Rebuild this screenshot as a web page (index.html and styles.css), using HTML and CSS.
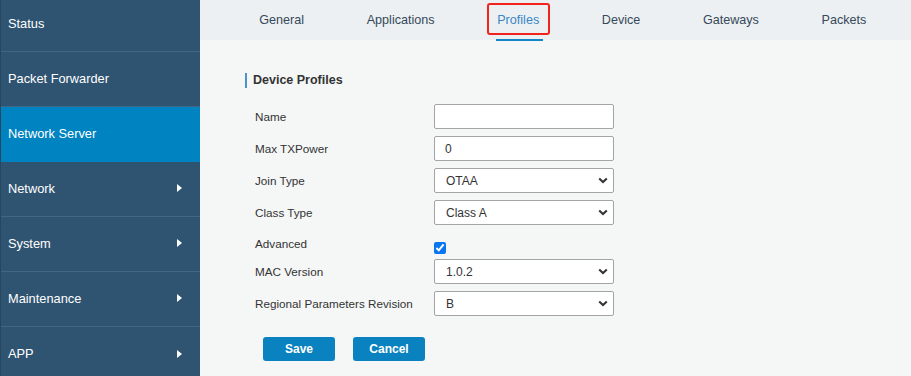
FILE: index.html
```html
<!DOCTYPE html>
<html>
<head>
<meta charset="utf-8">
<link rel="stylesheet" href="styles.css">
</head>
<body>
<div class="app">
  <nav class="sidebar">
    <div class="item first">Status</div>
    <div class="item">Packet Forwarder</div>
    <div class="item active">Network Server</div>
    <div class="item sub">Network<span class="caret"></span></div>
    <div class="item sub">System<span class="caret"></span></div>
    <div class="item sub">Maintenance<span class="caret"></span></div>
    <div class="item sub last">APP<span class="caret"></span></div>
  </nav>
  <main class="main">
    <div class="tabs">
      <div class="tab">General</div>
      <div class="tab">Applications</div>
      <div class="tab active">Profiles<span class="highlight"></span></div>
      <div class="tab">Device</div>
      <div class="tab">Gateways</div>
      <div class="tab">Packets</div>
    </div>
    <div class="content">
      <h3 class="section-title">Device Profiles</h3>
      <form class="form">
        <div class="row"><label>Name</label><input class="ctl" type="text" value=""></div>
        <div class="row"><label>Max TXPower</label><input class="ctl" type="text" value="0"></div>
        <div class="row"><label>Join Type</label><select class="ctl sel"><option>OTAA</option></select></div>
        <div class="row"><label>Class Type</label><select class="ctl sel"><option>Class A</option></select></div>
        <div class="row check-row"><label>Advanced</label><input class="check" type="checkbox" checked></div>
        <div class="row"><label>MAC Version</label><select class="ctl sel"><option>1.0.2</option></select></div>
        <div class="row"><label>Regional Parameters Revision</label><select class="ctl sel"><option>B</option></select></div>
        <div class="buttons">
          <button type="button" class="btn">Save</button>
          <button type="button" class="btn">Cancel</button>
        </div>
      </form>
    </div>
  </main>
</div>
</body>
</html>
```
FILE: styles.css
```css
* { box-sizing: border-box; }
html, body { margin: 0; padding: 0; }
body {
  font-family: "Liberation Sans", Arial, sans-serif;
  background: #f5f7f7;
  width: 911px;
  height: 376px;
  overflow: hidden;
}
.app {
  display: flex;
  height: 376px;
}
.sidebar {
  width: 200px;
  flex: none;
  background: #2f5471;
  border-left: 1px solid #27475f;
  display: flex;
  flex-direction: column;
}
.sidebar .item {
  height: 55px;
  flex: none;
  display: flex;
  align-items: center;
  justify-content: space-between;
  padding: 0 18px 2px 7px;
  color: #ffffff;
  font-size: 12.8px;
  border-bottom: 1px solid #426683;
}
.sidebar .item.first { height: 52px; padding-bottom: 5px; }
.sidebar .item.active {
  background: #0083c1;
  border-bottom-color: #0083c1;
  height: 55px;
}
.sidebar .item.last { border-bottom: none; }
.caret {
  width: 0;
  height: 0;
  border-top: 4px solid transparent;
  border-bottom: 4px solid transparent;
  border-left: 5px solid #ffffff;
}
.main {
  flex: 1;
  display: flex;
  flex-direction: column;
}
.tabs {
  height: 40px;
  background: #edf0f2;
  display: flex;
  align-items: stretch;
  padding-left: 28px;
}
.tab {
  position: relative;
  padding: 0 31.3px 1px;
  display: flex;
  align-items: center;
  font-size: 12.6px;
  color: #35495a;
}
.tab.active { color: #3a87c6; }
.tab.active::after {
  content: "";
  position: absolute;
  left: 30px;
  right: 28px;
  bottom: -1px;
  height: 2px;
  background: #1287c8;
}
.highlight {
  position: absolute;
  left: 21px;
  right: 20.5px;
  top: 3px;
  height: 32px;
  border: 2px solid #f2231d;
  border-radius: 3px;
}
.content {
  padding: 33px 0 0 45px;
}
.section-title {
  margin: 0 0 16px 0;
  font-size: 12.5px;
  font-weight: bold;
  color: #333333;
  border-left: 2px solid #4a93cb;
  padding-left: 6px;
  line-height: 14px;
  height: 15px;
}
.form {
  padding-left: 9px;
}
.row {
  display: flex;
  align-items: center;
  height: 25px;
  margin-bottom: 7px;
}
.row label {
  width: 180px;
  flex: none;
  font-size: 11.7px;
  color: #333333;
  padding-left: 1px;
}
.ctl {
  width: 180px;
  height: 25px;
  border: 1px solid #a4a4a4;
  border-radius: 2px;
  background: #ffffff;
  font-family: "Liberation Sans", Arial, sans-serif;
  font-size: 12px;
  color: #333333;
  padding: 0 10px;
  margin: 0;
  outline: none;
}
.sel {
  appearance: none;
  -webkit-appearance: none;
  padding-left: 11px;
  background-image: url("data:image/svg+xml,%3Csvg xmlns='http://www.w3.org/2000/svg' width='10' height='7' viewBox='0 0 10 7'%3E%3Cpath d='M1.2 1.4 L5 5 L8.8 1.4' fill='none' stroke='%23333' stroke-width='2'/%3E%3C/svg%3E");
  background-repeat: no-repeat;
  background-position: right 5px center;
}
.check-row {
  height: 20px;
  align-items: flex-start;
}
.check-row label { padding-top: 5px; }
.check {
  margin: 10px 0 0 0;
  width: 12px;
  height: 12px;
  accent-color: #0a75f0;
}
.buttons {
  display: flex;
  gap: 18px;
  padding-left: 9px;
  margin-top: 21px;
}
.btn {
  width: 72px;
  height: 24px;
  border: none;
  border-radius: 3px;
  background: #0a82c0;
  color: #ffffff;
  font-family: "Liberation Sans", Arial, sans-serif;
  font-size: 12px;
  font-weight: bold;
  padding: 0;
}
```
